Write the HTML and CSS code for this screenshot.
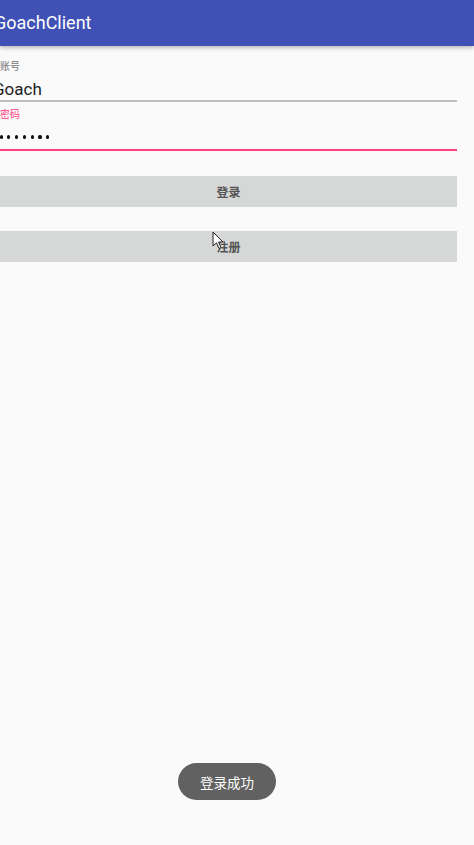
FILE: index.html
```html
<!DOCTYPE html>
<html lang="zh">
<head>
<meta charset="utf-8">
<title>GoachClient</title>
<link rel="stylesheet" href="styles.css">
</head>
<body>
<header class="appbar"><span class="title">GoachClient</span></header>
<main class="form">
  <div class="field">
    <div class="label">账号</div>
    <div class="value">Goach</div>
    <div class="line"></div>
  </div>
  <div class="field focused">
    <div class="label">密码</div>
    <div class="dots"><i></i><i></i><i></i><i></i><i></i><i></i><i></i></div>
    <div class="line"></div>
  </div>
  <div class="btn btn-login">登录</div>
  <div class="btn btn-reg">注册</div>
</main>
<svg class="cursor" width="14" height="20" viewBox="0 0 14 20"><path d="M1 1 L1 15 L4.5 11.8 L7 17.5 L9 16.6 L6.6 11 L11 11 Z" fill="#fff" stroke="#222" stroke-width="1"/></svg>
<div class="toast">登录成功</div>
</body>
</html>
```
FILE: styles.css
```css
html, body { margin: 0; padding: 0; }
body {
  width: 474px;
  height: 845px;
  background: #FAFAFA;
  font-family: Roboto, "Noto Sans CJK SC", sans-serif;
  position: relative;
  overflow: hidden;
}
.appbar {
  height: 46px;
  background: #3F51B5;
  box-shadow: 0 2px 4px rgba(0,0,0,0.25);
  display: flex;
  align-items: center;
  position: relative;
  z-index: 1;
}
.title {
  color: #fff;
  font-size: 18px;
  line-height: 46px;
  margin-left: -6px;
}
.form {
  padding-right: 17px;
  display: flex;
  flex-direction: column;
}
.field { display: flex; flex-direction: column; }
.field:first-child { margin-top: 14px; }
.field.focused { margin-top: 6px; }
.label {
  font-family: "Noto Sans CJK SC", sans-serif;
  font-size: 10px;
  line-height: 12px;
  color: #757575;
}
.value {
  margin-top: 7px;
  margin-left: -7px;
  font-size: 17px;
  line-height: 21px;
  color: #212121;
}
.line { height: 2px; background: #BDBDBD; }
.focused .label { color: #FF4081; }
.focused .line { background: #FF4081; }
.dots {
  height: 29px;
  display: flex;
  align-items: center;
  gap: 4.6px;
  margin-left: -0.5px;
  padding-top: 5px;
  box-sizing: border-box;
}
.dots i {
  width: 3.2px;
  height: 3.2px;
  border-radius: 50%;
  background: #111;
}
.btn {
  height: 31px;
  background: #D6D7D7;
  display: flex;
  align-items: center;
  justify-content: center;
  font-family: "Noto Sans CJK SC", sans-serif;
  font-size: 12px;
  font-weight: bold;
  color: #555;
}
.btn-login { margin-top: 25px; }
.btn-reg { margin-top: 24px; }
.cursor {
  position: absolute;
  left: 212px;
  top: 231px;
}
.toast {
  position: absolute;
  left: 178px;
  top: 763px;
  width: 98px;
  height: 37px;
  border-radius: 19px;
  background: #616161;
  color: #fff;
  font-family: "Noto Sans CJK SC", sans-serif;
  font-size: 13.5px;
  display: flex;
  align-items: center;
  justify-content: center;
}
```
